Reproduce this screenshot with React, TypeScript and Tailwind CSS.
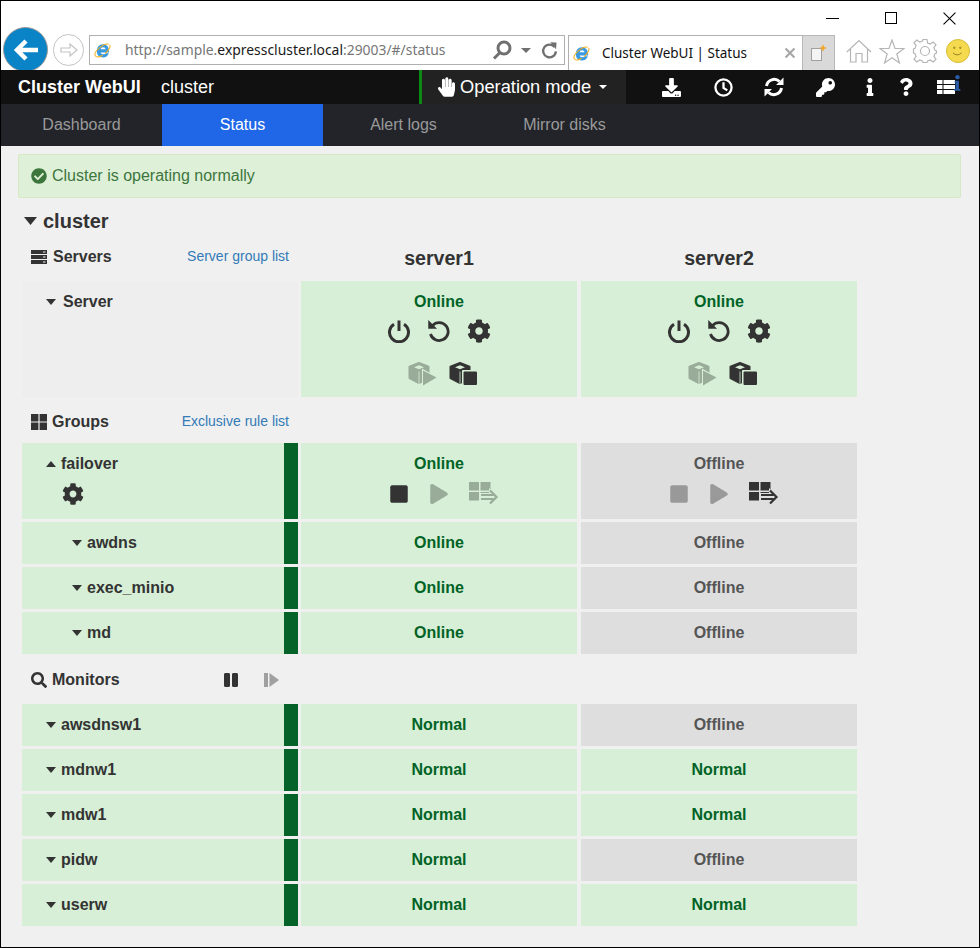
import React from "react";
import { FaCheckCircle, FaDownload, FaKey, FaInfo, FaQuestion, FaSearch, FaCog, FaPlay, FaStop, FaPause, FaHandPaper } from "react-icons/fa";

const Caret = ({ up = false, cls = "" }: { up?: boolean; cls?: string }) => (
  <svg viewBox="0 0 10 6" className={`w-[10px] h-[6px] shrink-0 fill-[#333] ${cls}`}>
    <path d={up ? "M0 6 L5 0 L10 6 Z" : "M0 0 L10 0 L5 6 Z"} />
  </svg>
);

const Power = () => (
  <svg viewBox="0 0 24 24" className="w-[24px] h-[24px] fill-none stroke-[#333]" strokeWidth="3">
    <path d="M7 5.2 A9.5 9.5 0 1 0 17 5.2" />
    <path d="M12 1.5 V12" />
  </svg>
);
const Undo = () => (
  <svg viewBox="0 0 24 24" className="w-[24px] h-[24px] fill-none stroke-[#333]" strokeWidth="2.8">
    <path d="M5.5 6.5 A9 9 0 1 1 3.5 15" />
    <path d="M1.5 1.5 L1.5 9.5 L9.5 9.5 Z" className="fill-[#333]" strokeWidth="0.5" />
  </svg>
);
const Cube = ({ color, bg }: { color: string; bg: string }) => (
  <g>
    <path d="M11 1 L20.500 4.800 V16 L11 21 L1.500 16 V4.800 Z" fill={color} stroke={color} strokeWidth="2" strokeLinejoin="round" />
    <path d="M6 5.200 L11 3.300 L16 5.200 L11 7.300 Z" fill={bg} />
    <path d="M11 9.500 V22" fill="none" stroke={bg} strokeWidth="0.800" />
  </g>
);
const CubePlay = () => (
  <svg viewBox="0 0 30 25" className="w-[30px] h-[25px]">
    <Cube color="#99ab99" bg="#d6efd6" />
    <path d="M14 6.500 L30 15.500 L14 25 Z" fill="#d6efd6" />
    <path d="M15 8.500 L28.500 15.500 L15 23.500 Z" fill="#99ab99" />
  </svg>
);
const CubeStop = () => (
  <svg viewBox="0 0 30 25" className="w-[30px] h-[25px]">
    <Cube color="#333" bg="#d6efd6" />
    <rect x="13" y="8" width="16" height="16" rx="1" fill="#d6efd6" />
    <rect x="14.500" y="9.500" width="13.500" height="13.500" rx="1" fill="#333" />
  </svg>
);
const Grid4 = ({ color, cls }: { color: string; cls: string }) => (
  <svg viewBox="0 0 16 16" className={cls} style={{ fill: color }}>
    <path d="M0 0 H7.400 V7.400 H0 Z M8.600 0 H16 V7.400 H8.600 Z M0 8.600 H7.400 V16 H0 Z M8.600 8.600 H16 V16 H8.600 Z" />
  </svg>
);
const GroupMove = ({ color, bg }: { color: string; bg: string }) => (
  <svg viewBox="0 0 30 24" className="w-[30px] h-[24px]">
    <g style={{ fill: color }}>
      <path d="M0 0 H10 V8.500 H0 Z M11.500 0 H21.500 V8.500 H11.500 Z M0 10 H10 V18.500 H0 Z M11.500 10 H21.500 V18.500 H11.500 Z" />
    </g>
    <path d="M11 11 H20 V6 L30 15 L20 24 V19 H11 Z" fill={bg} />
    <path d="M12 13 H24.500 M12 17 H24.500 M21 8.500 L27.500 15 L21 21.500" fill="none" stroke={color} strokeWidth="2.200" />
  </svg>
);

const TopIcon = ({ children, x }: { children: React.ReactNode; x: string }) => (
  <div className={`flex items-center justify-center text-white ${x}`}>{children}</div>
);

type Cell = "on" | "off";
const cellBg = { on: "bg-[#d6efd6]", off: "bg-[#dedede]" };
const cellText = { on: "text-[#006325]", off: "text-[#555555]" };

const Left = ({ name, indent, up = false, h, children }: { name: string; indent: boolean; up?: boolean; h: string; children?: React.ReactNode }) => (
  <div className={`w-[276px] ${h} flex bg-[#d6efd6]`}>
    <div className="flex-1 min-w-0">
      <div className={`flex items-center h-[42px] ${indent ? "pl-[50px]" : "pl-[24px]"}`}>
        <Caret up={up} />
        <span className="ml-[5px] text-[16px] font-bold text-[#333]">{name}</span>
      </div>
      {children}
    </div>
    <div className="w-[14px] bg-[#05632a]" />
  </div>
);

const Status = ({ kind, text, ml }: { kind: Cell; text: string; ml: string }) => (
  <div className={`w-[276px] h-[42px] ${ml} ${cellBg[kind]} ${cellText[kind]} flex items-center justify-center text-[16px] font-bold`}>
    {text}
  </div>
);

const SubRow = ({ name }: { name: string }) => (
  <div className="flex">
    <Left name={name} indent h="h-[42px]" />
    <Status kind="on" text="Online" ml="ml-[3px]" />
    <Status kind="off" text="Offline" ml="ml-[4px]" />
  </div>
);

const MonRow = ({ name, s2 }: { name: string; s2: Cell }) => (
  <div className="flex">
    <Left name={name} indent={false} h="h-[42px]" />
    <Status kind="on" text="Normal" ml="ml-[3px]" />
    <Status kind={s2} text={s2 === "on" ? "Normal" : "Offline"} ml="ml-[4px]" />
  </div>
);

const ServerCell = ({ ml }: { ml: string }) => (
  <div className={`w-[276px] h-[116px] ${ml} bg-[#d6efd6] flex flex-col items-center`}>
    <div className="mt-[11px] h-[20px] leading-[20px] text-[16px] font-bold text-[#006325]">Online</div>
    <div className="mt-[7px] flex gap-[16px] h-[24px]">
      <Power />
      <Undo />
      <FaCog className="w-[24px] h-[24px] text-[#333]" />
    </div>
    <div className="mt-[19px] flex gap-[11px] ml-[8px]">
      <CubePlay />
      <CubeStop />
    </div>
  </div>
);

export default function App() {
  return (
    <div className="w-[980px] h-[948px] bg-[#f0f0f0] border border-black overflow-hidden" style={{ fontFamily: '"Liberation Sans", Arial, sans-serif' }}>
      {/* Browser chrome */}
      <div className="h-[69px] bg-white overflow-hidden">
        <div className="h-[33px] flex justify-end">
          <div className="flex items-start pt-[11px] pr-[23px] gap-[46px]">
            <div className="w-[13px] h-[1px] bg-black mt-[6px]" />
            <div className="w-[12px] h-[12px] border border-black" />
            <svg viewBox="0 0 12 12" className="w-[13px] h-[13px] stroke-black fill-none"><path d="M0.500 0.500 L11.500 11.500 M11.500 0.500 L0.500 11.500" /></svg>
          </div>
        </div>
        <div className="flex h-[36px] items-start">
          <div className="ml-[2px] -mt-[7px] w-[45px] h-[45px] rounded-full bg-[#0a84c6] border border-[#9a9a9a] flex items-center justify-center shrink-0">
            <svg viewBox="0 0 26 24" className="w-[26px] h-[24px] fill-none stroke-white" strokeWidth="4.500"><path d="M25 12 H4 M13 3 L4 12 L13 21" /></svg>
          </div>
          <div className="ml-[5px] mt-[0px] w-[31px] h-[32px] rounded-full border border-[#c4c4c4] flex items-center justify-center shrink-0">
            <svg viewBox="0 0 18 16" className="w-[18px] h-[16px] fill-none stroke-[#c4c4c4]" strokeWidth="1.200"><path d="M1 6 H10 V2 L17 8 L10 14 V10 H1 Z" /></svg>
          </div>
          <div className="ml-[5px] mt-[1px] w-[476px] h-[30px] border border-[#b0b0b0] flex items-center shrink-0 bg-white">
            <IeLogo />
            <span className="ml-[14px] text-[13.900px] text-[#767676]" style={{ fontFamily: '"Noto Sans", sans-serif' }}>
              http://sample.<span className="text-[#1a1a1a]">expresscluster.local</span>:29003/#/status
            </span>
            <div className="ml-auto flex items-center pr-[6px]">
              <svg viewBox="0 0 20 20" className="w-[20px] h-[20px] fill-none stroke-[#707070]" strokeWidth="3"><circle cx="12" cy="8" r="6" /><path d="M8 12.500 L2 18.500" /></svg>
              <div className="ml-[9px] w-0 h-0 border-l-[5px] border-r-[5px] border-t-[5px] border-l-transparent border-r-transparent border-t-[#707070]" />
              <svg viewBox="0 0 20 20" className="ml-[10px] w-[17px] h-[19px] fill-none stroke-[#707070]" strokeWidth="2.800"><path d="M16 6 A7.500 7.500 0 1 0 17.500 11" /><path d="M11.500 0.500 L18 1 L17.500 8 Z" className="fill-[#707070]" strokeWidth="0.500" /></svg>
            </div>
          </div>
          <div className="ml-[3px] mt-[1px] w-[234px] h-[35px] border-t border-l border-[#b0b0b0] flex items-center shrink-0">
            <IeLogo />
            <span className="ml-[12px] text-[13.500px] text-[#111]" style={{ fontFamily: '"Noto Sans", sans-serif' }}>Cluster WebUI | Status</span>
            <svg viewBox="0 0 10 10" className="ml-auto mr-[7px] w-[10px] h-[10px] fill-none stroke-[#a8a8a8]" strokeWidth="2.200"><path d="M0.500 0.500 L9.500 9.500 M9.500 0.500 L0.500 9.500" /></svg>
          </div>
          <div className="ml-[0px] mt-[1px] w-[33px] h-[35px] bg-[#d9d9d9] border-t border-l border-r border-[#b8b8b8] flex items-center justify-center shrink-0">
            <svg viewBox="0 0 16 18" className="w-[16px] h-[18px]">
              <rect x="0.500" y="4.500" width="10" height="12" fill="#f4f4f4" stroke="#a0a0a0" />
              <path d="M12 0 L13 3 L16 4 L13 5 L12 8 L11 5 L8 4 L11 3 Z" fill="#f5a623" />
            </svg>
          </div>
          <div className="ml-[11px] flex items-center gap-[7px] shrink-0 h-[34px]">
            <svg viewBox="0 0 26 24" className="w-[26px] h-[24px] fill-none stroke-[#b5b5b5]" strokeWidth="1.200"><path d="M0.800 13 L13 1.500 L25 13 M4.500 10 V23 H10 V14.500 H16 V23 H21.500 V10" /></svg>
            <svg viewBox="0 0 26 25" className="w-[26px] h-[25px] fill-none stroke-[#b5b5b5]" strokeWidth="1.200"><path d="M13 1 L16 9.500 L25 9.500 L17.800 15 L20.500 24 L13 18.700 L5.500 24 L8.200 15 L1 9.500 L10 9.500 Z" /></svg>
            <GearOutline />
            <div className="ml-[1px] w-[24px] h-[24px] rounded-full bg-[#f5d94e] border border-[#d8bd3a]">
              <svg viewBox="0 0 24 24" className="w-[22px] h-[22px] fill-none stroke-[#8a7a20]" strokeWidth="1"><path d="M6.500 14 Q11 18.500 16 14" /><circle cx="8" cy="8.500" r="0.800" /><circle cx="14.500" cy="8.500" r="0.800" /></svg>
            </div>
          </div>
        </div>
      </div>

      {/* Navbar */}
      <div className="h-[34px] bg-[#111111] flex items-center">
        <span className="ml-[17px] w-[143px] text-[18px] font-bold text-white">Cluster WebUI</span>
        <span className="text-[18px] text-white w-[258px]">cluster</span>
        <div className="w-[207px] h-full bg-[#222222] border-l-[3px] border-[#0a8a14] flex items-center shrink-0">
          <FaHandPaper className="ml-[16px] w-[17px] h-[20px] text-white" />
          <span className="ml-[5px] text-[18.300px] text-white">Operation mode</span>
          <div className="ml-[8px] w-0 h-0 border-l-[4px] border-r-[4px] border-t-[4px] border-l-transparent border-r-transparent border-t-white" />
        </div>
        <div className="flex h-full">
          <TopIcon x="ml-[33px] w-[24px]"><FaDownload className="w-[19px] h-[19px]" /></TopIcon>
          <TopIcon x="ml-[28px] w-[24px]">
            <svg viewBox="0 0 20 20" className="w-[19px] h-[19px] fill-none stroke-white" strokeWidth="2.400"><circle cx="10" cy="10" r="8.500" /><path d="M10 4.500 V10.500 L14 13" /></svg>
          </TopIcon>
          <TopIcon x="ml-[27px] w-[24px]">
            <svg viewBox="0 0 20 20" className="w-[20px] h-[20px] fill-none stroke-white" strokeWidth="3">
              <path d="M2.500 9 A7.800 7.800 0 0 1 15.500 4.500" />
              <path d="M17.500 11 A7.800 7.800 0 0 1 4.500 15.500" />
              <path d="M19.500 0.500 V8 H12 Z M0.500 19.500 V12 H8 Z" className="fill-white" strokeWidth="0" />
            </svg>
          </TopIcon>
          <TopIcon x="ml-[27px] w-[24px]"><FaKey className="w-[19px] h-[19px]" /></TopIcon>
          <TopIcon x="ml-[21px] w-[24px]"><FaInfo className="w-[18px] h-[18px]" /></TopIcon>
          <TopIcon x="ml-[12px] w-[24px]"><FaQuestion className="w-[18px] h-[18px]" /></TopIcon>
          <div className="ml-[18px] w-[26px] flex items-center relative">
            <svg viewBox="0 0 18 14" className="ml-[1px] w-[18px] h-[14px] fill-white"><path d="M0 0 H18 V4 H0 Z M0 5 H18 V9 H0 Z M0 10 H18 V14 H0 Z" /><path d="M5.500 0 H6.500 V14 H5.500 Z" fill="#111" /></svg>
            <svg viewBox="0 0 7 17" className="absolute left-[18px] top-[5px] w-[7px] h-[16px] fill-[#2a5ca8]"><circle cx="3.500" cy="2.300" r="2.300" /><path d="M0.500 6 H5 V15 H6.500 V16.800 H0 V15 H1.500 V8 H0.500 Z" /></svg>
          </div>
        </div>
      </div>

      {/* Tabs */}
      <div className="h-[42px] bg-[#22242a] flex text-[16px] text-[#9a9a9a]">
        <div className="w-[161px] flex items-center justify-center">Dashboard</div>
        <div className="w-[161px] flex items-center justify-center bg-[#2067e8] text-white">Status</div>
        <div className="w-[161px] flex items-center justify-center">Alert logs</div>
        <div className="w-[161px] flex items-center justify-center">Mirror disks</div>
      </div>

      {/* Content */}
      <div className="pl-[21px] pt-[8px]">
        <div className="-ml-[4px] w-[943px] h-[44px] bg-[#dff0d8] border border-[#d6e9c6] rounded-[2px] flex items-center pl-[12px] text-[16px] text-[#3c763d]">
          <FaCheckCircle className="w-[16px] h-[16px] text-[#3c763d]" />
          <span className="ml-[5px]">Cluster is operating normally</span>
        </div>

        <div className="mt-[9px] h-[28px] flex items-center pl-[2px]">
          <Caret cls="w-[13px] h-[8px]" />
          <span className="ml-[6px] text-[20px] font-bold text-[#333]">cluster</span>
        </div>

        <div className="mt-[5px] h-[41px] flex">
          <div className="w-[267px] ml-[9px] h-[34px] flex items-center">
            <svg viewBox="0 0 16 14" className="w-[16px] h-[14px] fill-[#333]"><path d="M0 0 H16 V4 H0 Z M0 5 H16 V9 H0 Z M0 10 H16 V14 H0 Z" /><path d="M12 1.500 H14.500 V2.500 H12 Z M12 6.500 H14.500 V7.500 H12 Z M12 11.500 H14.500 V12.500 H12 Z" fill="#f0f0f0" /></svg>
            <span className="ml-[6px] text-[16px] font-bold text-[#333]">Servers</span>
            <span className="ml-auto mr-[9px] -mt-[2px] text-[14px] text-[#337ab7]">Server group list</span>
          </div>
          <div className="w-[276px] ml-[3px] text-center text-[19.600px] font-bold text-[#333] leading-[36px]">server1</div>
          <div className="w-[276px] ml-[4px] text-center text-[19.600px] font-bold text-[#333] leading-[36px]">server2</div>
        </div>

        <div className="flex">
          <div className="w-[276px] h-[116px] bg-[#eeeeee] pl-[24px]">
            <div className="h-[42px] flex items-center">
              <Caret />
              <span className="ml-[7px] text-[16px] font-bold text-[#333]">Server</span>
            </div>
          </div>
          <ServerCell ml="ml-[3px]" />
          <ServerCell ml="ml-[4px]" />
        </div>

        <div className="h-[46px] w-[276px] pl-[9px] pt-[4px] flex items-center">
          <Grid4 color="#333" cls="w-[16px] h-[16px]" />
          <span className="ml-[5px] text-[16px] font-bold text-[#333]">Groups</span>
          <span className="ml-auto mr-[9px] -mt-[2px] text-[14px] text-[#337ab7]">Exclusive rule list</span>
        </div>

        <div className="flex flex-col gap-[3px]">
          <div className="flex">
            <Left name="failover" indent={false} up h="h-[76px]">
              <FaCog className="ml-[40px] -mt-[2px] w-[22px] h-[22px] text-[#333]" />
            </Left>
            <div className="w-[276px] h-[76px] ml-[3px] bg-[#d6efd6] flex flex-col items-center">
              <div className="mt-[11px] leading-[20px] text-[16px] font-bold text-[#006325]">Online</div>
              <div className="mt-[8px] flex items-center gap-[18px] ml-[10px]">
                <FaStop className="w-[20px] h-[20px] text-[#333]" />
                <FaPlay className="w-[24px] h-[20px] text-[#99ab99]" />
                <GroupMove color="#99ab99" bg="#d6efd6" />
              </div>
            </div>
            <div className="w-[276px] h-[76px] ml-[4px] bg-[#dedede] flex flex-col items-center">
              <div className="mt-[11px] leading-[20px] text-[16px] font-bold text-[#555]">Offline</div>
              <div className="mt-[8px] flex items-center gap-[18px] ml-[10px]">
                <FaStop className="w-[20px] h-[20px] text-[#999]" />
                <FaPlay className="w-[24px] h-[20px] text-[#999]" />
                <GroupMove color="#333" bg="#dedede" />
              </div>
            </div>
          </div>
          <SubRow name="awdns" />
          <SubRow name="exec_minio" />
          <SubRow name="md" />
        </div>

        <div className="h-[50px] w-[276px] pl-[9px] pt-[2px] flex items-center">
          <FaSearch className="w-[16px] h-[16px] text-[#333]" />
          <span className="ml-[5px] text-[16px] font-bold text-[#333]">Monitors</span>
          <FaPause className="ml-[103px] w-[16px] h-[16px] text-[#333]" />
          <svg viewBox="0 0 15 14" className="ml-[25px] w-[15px] h-[14px] fill-[#a0a0a0]"><path d="M0 0 H4 V14 H0 Z M5.500 0 L15 7 L5.500 14 Z" /></svg>
        </div>

        <div className="flex flex-col gap-[3px]">
          <MonRow name="awsdnsw1" s2="off" />
          <MonRow name="mdnw1" s2="on" />
          <MonRow name="mdw1" s2="on" />
          <MonRow name="pidw" s2="off" />
          <MonRow name="userw" s2="on" />
        </div>
      </div>
    </div>
  );
}

function IeLogo() {
  return (
    <svg viewBox="0 0 18 18" className="ml-[4px] w-[17px] h-[17px] shrink-0">
      <path d="M3 9.500 Q3 3 9.500 2.500 Q16 3 16 10 V11 H7 Q7.500 13 10 13 Q12 13 13 12 H15.800 Q14 16.500 9.500 16.500 Q3 16 3 9.500 Z M7 7.800 H12.300 Q12 5.600 9.600 5.600 Q7.500 5.700 7 7.800 Z" fill="#3a9ae0" fillRule="evenodd" />
      <ellipse cx="9" cy="9" rx="9.500" ry="4.200" transform="rotate(-38 9 9)" fill="none" stroke="#f2b01e" strokeWidth="1.100" strokeDasharray="11 3 18 0" />
    </svg>
  );
}

function GearOutline() {
  return (
    <svg viewBox="0 0 26 26" className="w-[26px] h-[26px] fill-none stroke-[#b5b5b5]" strokeWidth="1.200">
      <circle cx="13" cy="13" r="4.500" />
      <path d="M11 1.500 H15 L15.600 5 L18.300 6.100 L21.200 4 L24 6.800 L21.900 9.700 L23 12.400 L24.500 13 V15 L23 15.600 L21.900 18.300 L24 21.200 L21.200 24 L18.300 21.900 L15.600 23 L15 24.500 H11 L10.400 23 L7.700 21.900 L4.800 24 L2 21.200 L4.100 18.300 L3 15.600 L1.500 15 V11 L3 10.400 L4.100 7.700 L2 4.800 L4.800 2 L7.700 4.100 L10.400 3 Z" />
    </svg>
  );
}
